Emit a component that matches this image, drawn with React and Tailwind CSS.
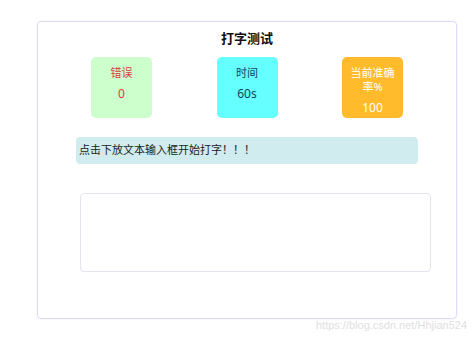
import React from "react";

function StatBox({ label, value, className }) {
    return (
        <div className={`w-[61px] h-[61px] rounded-[5px] px-[6px] pt-[9px] text-center text-[11px] leading-[14px] ${className}`}>
            <p>{label}</p>
            <p className="mt-[7px] text-[12px]">{value}</p>
        </div>
    );
}

export default function App() {
    return (
        <div
            className="relative w-[474px] h-[338px] bg-white overflow-hidden"
            style={{ fontFamily: '"Noto Sans", "Noto Sans CJK SC", sans-serif' }}
        >
            <div className="ml-[37px] mt-[21px] w-[420px] h-[298px] border border-[#dcdcf6] rounded-[4px] shadow-[0_0_2px_rgba(200,200,240,0.4)]">
                <h1 className="mt-[7px] text-center text-[13px] leading-[18px] font-bold text-[#111]">
                    打字测试
                </h1>
                <div className="mt-[10px] w-[312px] mx-auto flex justify-between">
                    <StatBox label="错误" value="0" className="bg-[#ccffcc] text-[#e0393e]" />
                    <StatBox label="时间" value="60s" className="bg-[#66ffff] text-[#0d4660]" />
                    <StatBox label="当前准确率%" value="100" className="bg-[#ffbb2b] text-white" />
                </div>
                <div className="mt-[19px] ml-[38px] w-[342px] h-[27px] rounded-[4px] bg-[#d1ecee] px-[3px] flex items-center text-[11px] text-[#222]">
                    点击下放文本输入框开始打字！！！
                </div>
                <textarea className="block mt-[29px] ml-[42px] w-[351px] h-[79px] border border-[#e4e4f0] rounded-[4px] resize-none outline-none" />
            </div>
            <span className="absolute right-[7px] bottom-[5px] text-[11px] text-[#e0e0e0]" style={{ fontFamily: '"Liberation Sans", sans-serif' }}>
                https://blog.csdn.net/Hhjian524
            </span>
        </div>
    );
}
